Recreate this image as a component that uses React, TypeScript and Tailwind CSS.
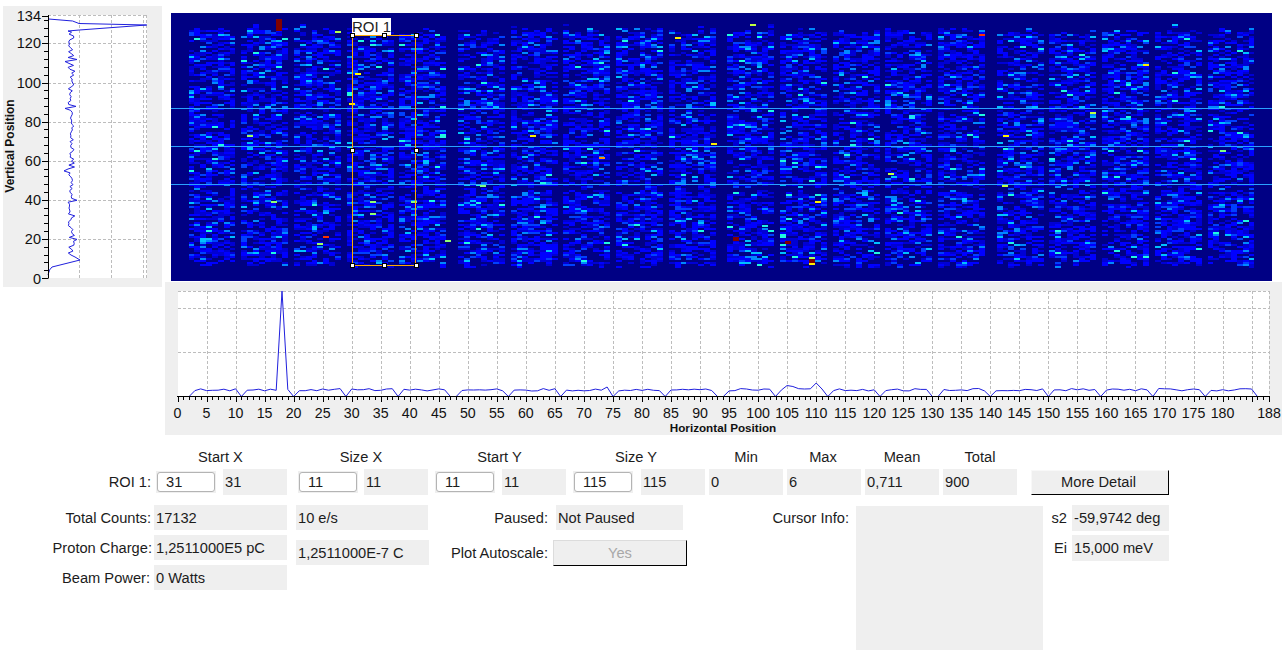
import React from "react";

function rng(seed: number) {
  return () => {
    seed |= 0;
    seed = (seed + 0x6d2b79f5) | 0;
    let t = Math.imul(seed ^ (seed >>> 15), 1 | seed);
    t = (t + Math.imul(t ^ (t >>> 7), 61 | t)) ^ t;
    return ((t ^ (t >>> 14)) >>> 0) / 4294967296;
  };
}

/* ---------- heat map data ---------- */
const BANKS = [3, 12, 21, 30, 39, 49, 58, 67, 76, 85, 95, 104, 113, 122, 131, 141, 150, 159, 168, 177];
const LEVELS = ["#0000d4", "#0000ff", "#0040ff", "#0088ff", "#00c0ff", "#20f8e0"];
const CW = 1101 / 188;

function buildHeat() {
  const r = rng(20240611);
  const paths: string[] = LEVELS.map(() => "");
  for (const b of BANKS) {
    for (let i = 0; i < 8; i++) {
      const c = b + i;
      const x0 = Math.round(171 + c * CW);
      const x1 = Math.round(171 + (c + 1) * CW);
      const top = 28 + Math.floor(r() * 4) * 2 + (r() < 0.2 ? -4 : 0);
      const bottom = 262 + Math.floor(r() * 4) * 2;
      for (let y = top; y < bottom; y += 2) {
        let d = 0.6;
        if (y >= 185 && y <= 190) d = 0.32;
        if (y >= 110 && y <= 113) d = 0.42;
        if (r() > d) continue;
        const p = r();
        const l = p < 0.34 ? 0 : p < 0.8 ? 1 : p < 0.89 ? 2 : p < 0.955 ? 3 : p < 0.988 ? 4 : 5;
        paths[l] += `M${x0} ${y}H${x1}V${y + 2}H${x0}Z`;
      }
    }
  }
  return paths;
}
const HEAT = buildHeat();

const HOT: [number, number, string, number?][] = [
  [276, 19, "#800000", 12],
  [979, 34, "#ff3000"],
  [355, 73, "#ffff00"],
  [349, 103, "#ffee00"],
  [323, 236, "#ff3000"],
  [317, 243, "#a0ff60"],
  [247, 135, "#a0ff60"],
  [370, 201, "#90ff70"],
  [370, 213, "#90ff70"],
  [271, 201, "#90ff70"],
  [411, 201, "#80ff80"],
  [335, 31, "#b0ff50"],
  [733, 237, "#800000", 4],
  [785, 241, "#800000", 3],
  [809, 257, "#a0ff60"],
  [809, 259, "#800000", 4],
  [809, 263, "#ffee00"],
  [750, 24, "#c0ff40"],
  [599, 157, "#ff9000"],
  [909, 115, "#20e0f0", 4],
  [1143, 64, "#ffee00"],
  [815, 201, "#ffee00"],
  [530, 135, "#ffee00"],
  [675, 37, "#ffee00"],
  [711, 143, "#ffee00"],
  [1003, 135, "#ffee00"],
  [1002, 185, "#c0ff40"],
  [762, 225, "#20f0e0"],
  [480, 185, "#80ff80"],
  [888, 173, "#c0ff40"],
  [1220, 150, "#80ff80"],
  [1090, 112, "#c0ff40"],
  [445, 240, "#90ff70"],
];

/* ---------- left profile ---------- */
function buildLeft() {
  const r = rng(77);
  const pts: string[] = ["48,275", "49.5,270", "52,267", "60,265", "68,263", "80,260", "75,257"];
  const special: Record<number, number> = { 239: 77, 201: 77, 171: 64, 108: 65, 107: 76, 61: 65, 60: 77 };
  for (let y = 255; y > 31; y -= 1.955) {
    let x = 71.5 + (r() - 0.5) * 7;
    for (const k of Object.keys(special)) {
      if (Math.abs(Number(k) - y) < 1) x = special[Number(k)];
    }
    pts.push(`${x.toFixed(1)},${y.toFixed(1)}`);
  }
  pts.push("68,31", "79.3,30", "146.7,25", "79,23.5", "72.6,21", "48.7,19");
  return pts.join(" ");
}

/* ---------- bottom profile ---------- */
const ZEROS = new Set([2, 11, 20, 29, 38, 47, 48, 57, 66, 75, 84, 93, 94, 103, 112, 121, 130, 131, 140, 150, 159, 168, 177, 186]);
const bx = (c: number) => 177.5 + c * 5.806;
function buildBottom() {
  const r = rng(9);
  const pts: string[] = [];
  for (let c = 2; c <= 186; c++) {
    let y = 388.5 + r() * 2.5;
    if (ZEROS.has(c)) y = 396.5;
    if (c === 18) y = 291;
    if (c === 110) y = 383;
    if (c === 105) y = 385.5;
    if (c === 106) y = 386.5;
    if (c === 74) y = 387;
    pts.push(`${bx(c).toFixed(1)},${y.toFixed(1)}`);
  }
  return pts.join(" ");
}

const GRID = "#bdbdbd";
const TXT = { fontFamily: "'Liberation Sans', Arial, sans-serif" };

function LeftPlot() {
  const ly = (v: number) => 278 - v * 1.955;
  const majors = [20, 40, 60, 80, 100, 120];
  const labels = [0, 20, 40, 60, 80, 100, 120];
  const minors: number[] = [];
  for (let v = 0; v <= 134; v += 4) if (v % 20 !== 0) minors.push(v);
  return (
    <svg viewBox="3 6 159 281" width={159} height={281} className="block">
      <rect x={48} y={15} width={99} height={263} fill="#fff" />
      {[79.5, 111.5, 143.5, 146.5].map((x) => (
        <line key={x} x1={x} x2={x} y1={15} y2={278} stroke={GRID} strokeDasharray="3 2" />
      ))}
      <line x1={48} x2={147} y1={15.5} y2={15.5} stroke={GRID} strokeDasharray="3 2" />
      {majors.map((v) => (
        <line key={v} x1={48} x2={147} y1={Math.round(ly(v)) + 0.5} y2={Math.round(ly(v)) + 0.5} stroke={GRID} strokeDasharray="3 2" />
      ))}
      <polyline points={buildLeft()} fill="none" stroke="#2020dd" strokeWidth={1} />
      <line x1={48.5} x2={48.5} y1={15} y2={278.5} stroke="#000" />
      {minors.map((v) => (
        <line key={v} x1={44} x2={48} y1={Math.round(ly(v)) + 0.5} y2={Math.round(ly(v)) + 0.5} stroke="#000" />
      ))}
      {[...labels, 134].map((v) => (
        <line key={v} x1={42} x2={48} y1={Math.round(ly(v)) + 0.5} y2={Math.round(ly(v)) + 0.5} stroke="#000" />
      ))}
      {labels.map((v) => (
        <text key={v} x={41} y={v === 0 ? 284 : ly(v) + 5} textAnchor="end" fontSize={14.5} fill="#111" style={TXT}>
          {v}
        </text>
      ))}
      <text x={41} y={21} textAnchor="end" fontSize={14.5} fill="#111" style={TXT}>
        134
      </text>
      <text transform="translate(14 146) rotate(-90)" textAnchor="middle" fontSize={12} fontWeight="bold" fill="#111" style={TXT}>
        Vertical Position
      </text>
    </svg>
  );
}

function HeatMap() {
  const handles: [number, number][] = [
    [352, 35], [384, 35], [416, 35],
    [352, 150], [416, 150],
    [352, 265], [384, 265], [416, 265],
  ];
  return (
    <svg viewBox="171 13 1101 268" width={1101} height={268} className="block" shapeRendering="crispEdges">
      <rect x={171} y={13} width={1101} height={268} fill="#000084" />
      {HEAT.map((d, i) => (
        <path key={i} d={d} fill={LEVELS[i]} />
      ))}
      {HOT.map(([x, y, c, h], i) => (
        <rect key={i} x={x} y={y} width={6} height={h ?? 2} fill={c} />
      ))}
      {[108, 146, 184].map((y) => (
        <rect key={y} x={171} y={y} width={1101} height={1} fill="#2aa0ff" />
      ))}
      <rect x={352.5} y={35.5} width={63} height={229.5} fill="none" stroke="#ffaa00" />
      <rect x={352} y={18} width={39} height={17} fill="#fff" />
      <text x={352} y={32} fontSize={15} fill="#222" style={TXT} shapeRendering="auto">
        ROI 1
      </text>
      {handles.map(([x, y]) => (
        <g key={`${x}-${y}`}>
          <rect x={x - 2} y={y - 2} width={5} height={5} fill="#000" />
          <rect x={x - 1} y={y - 1} width={3} height={3} fill="#fff" />
        </g>
      ))}
    </svg>
  );
}

function BottomPlot() {
  const ticks: number[] = [];
  for (let c = 0; c <= 188; c++) ticks.push(c);
  const labels: number[] = [];
  for (let c = 0; c <= 180; c += 5) labels.push(c);
  labels.push(188);
  const grid: number[] = [];
  for (let c = 5; c <= 185; c += 5) grid.push(c);
  return (
    <svg viewBox="165 282 1117 153" width={1117} height={153} className="block">
      <rect x={178} y={291} width={1091} height={106} fill="#fff" />
      {grid.map((c) => (
        <line key={c} x1={Math.round(bx(c)) + 0.5} x2={Math.round(bx(c)) + 0.5} y1={291} y2={397} stroke={GRID} strokeDasharray="3 2" />
      ))}
      <line x1={1269.5} x2={1269.5} y1={291} y2={397} stroke={GRID} strokeDasharray="3 2" />
      {[291.5, 308.5, 352.5].map((y) => (
        <line key={y} x1={178} x2={1269} y1={y} y2={y} stroke={GRID} strokeDasharray="3 2" />
      ))}
      <polyline points={buildBottom()} fill="none" stroke="#2020dd" strokeWidth={1} />
      <line x1={177} x2={1270} y1={396.5} y2={396.5} stroke="#000" />
      {ticks.map((c) => {
        const x = Math.round(bx(c)) + 0.5;
        const major = c % 5 === 0 || c === 188;
        return <line key={c} x1={x} x2={x} y1={397} y2={major ? 402 : 400} stroke="#000" />;
      })}
      {labels.map((c) => (
        <text key={c} x={bx(c)} y={418} textAnchor="middle" fontSize={14.2} fill="#111" style={TXT}>
          {c}
        </text>
      ))}
      <text x={723} y={432} textAnchor="middle" fontSize={11.7} fontWeight="bold" fill="#111" style={TXT}>
        Horizontal Position
      </text>
    </svg>
  );
}

function Field({ className, children }: { className: string; children?: React.ReactNode }) {
  return <div className={`bg-[#efefef] pl-[2px] flex items-center whitespace-nowrap ${className}`}>{children}</div>;
}

function Input({ className, value }: { className: string; value: string }) {
  return (
    <div className={`w-[60px] h-[22px] bg-[#efefef] flex items-center justify-center ${className}`}>
      <div className="w-[58px] h-[20px] bg-white border border-[#b4b4b4] rounded-[3px] pl-[8px] flex items-center">{value}</div>
    </div>
  );
}

function Label({ className, children }: { className: string; children: React.ReactNode }) {
  return <div className={`text-right whitespace-nowrap flex items-center justify-end ${className}`}>{children}</div>;
}

function Head({ className, children }: { className: string; children: React.ReactNode }) {
  return <div className={`text-center ${className}`}>{children}</div>;
}

export default function App() {
  return (
    <div className="w-[1285px] h-[662px] overflow-hidden bg-white text-[14.67px] leading-[16px] text-[#1c1c1c] font-['Liberation_Sans',Arial,sans-serif]">
      <div className="flex items-start pl-[3px]">
        <div className="mt-[6px] w-[159px] h-[281px] bg-[#efefef]">
          <LeftPlot />
        </div>
        <div className="ml-[3px] w-[1117px]">
          <div className="ml-[6px] mt-[13px] w-[1101px] h-[268px]">
            <HeatMap />
          </div>
          <div className="mt-[1px] h-[153px] bg-[#efefef]">
            <BottomPlot />
          </div>
        </div>
      </div>

      <div className="mt-[14px] h-[16px] flex pl-[155px]">
        <Head className="w-[131px]">Start X</Head>
        <Head className="ml-[9px] w-[132px]">Size X</Head>
        <Head className="ml-[7px] w-[131px]">Start Y</Head>
        <Head className="ml-[7px] w-[128px]">Size Y</Head>
        <Head className="ml-[9px] w-[74px]">Min</Head>
        <Head className="ml-[3px] w-[74px]">Max</Head>
        <Head className="ml-[5px] w-[74px]">Mean</Head>
        <Head className="ml-[4px] w-[74px]">Total</Head>
      </div>

      <div className="mt-[4px] h-[26px] flex items-center">
        <Label className="w-[151px]">ROI 1:</Label>
        <Input className="ml-[5px]" value="31" />
        <Field className="ml-[7px] w-[64px] h-[26px]">31</Field>
        <Input className="ml-[11px]" value="11" />
        <Field className="ml-[6px] w-[64px] h-[26px]">11</Field>
        <Input className="ml-[7px]" value="11" />
        <Field className="ml-[7px] w-[64px] h-[26px]">11</Field>
        <Input className="ml-[7px]" value="115" />
        <Field className="ml-[8px] w-[64px] h-[26px]">115</Field>
        <Field className="ml-[4px] w-[74px] h-[26px]">0</Field>
        <Field className="ml-[4px] w-[74px] h-[26px]">6</Field>
        <Field className="ml-[4px] w-[74px] h-[26px]">0,711</Field>
        <Field className="ml-[4px] w-[74px] h-[26px]">900</Field>
        <button className="ml-[14px] w-[138px] h-[25px] bg-[#efefef] pr-[3px] border-t border-l border-t-[#f8f8f8] border-l-[#f8f8f8] border-r border-b border-r-black border-b-black">
          More Detail
        </button>
      </div>

      <div className="mt-[10px] flex items-start">
        <div className="flex flex-col gap-[5px]">
          <div className="flex">
            <Label className="w-[151px] h-[25px]">Total Counts:</Label>
            <Field className="ml-[3px] w-[133px] h-[25px]">17132</Field>
          </div>
          <div className="flex">
            <Label className="w-[152px] h-[25px]">Proton Charge:</Label>
            <Field className="ml-[2px] w-[133px] h-[25px]">1,2511000E5 pC</Field>
          </div>
          <div className="flex">
            <Label className="w-[150px] h-[25px]">Beam Power:</Label>
            <Field className="ml-[4px] w-[133px] h-[25px]">0 Watts</Field>
          </div>
        </div>

        <div className="ml-[9px] flex flex-col gap-[10px]">
          <Field className="w-[132px] h-[25px]">10 e/s</Field>
          <Field className="w-[133px] h-[25px]">1,2511000E-7 C</Field>
        </div>

        <div className="flex flex-col gap-[10px]">
          <div className="flex">
            <Label className="w-[119px] h-[25px]">Paused:</Label>
            <Field className="ml-[8px] w-[127px] h-[25px]">Not Paused</Field>
          </div>
          <div className="flex">
            <Label className="w-[119px] h-[25px]">Plot Autoscale:</Label>
            <button
              disabled
              className="ml-[5px] w-[134px] h-[26px] bg-[#efefef] text-[#a8a8a8] border-t border-l border-t-[#dcdcdc] border-l-[#dcdcdc] border-r border-b border-r-black border-b-black"
            >
              Yes
            </button>
          </div>
        </div>

        <Label className="w-[162px] h-[25px]">Cursor Info:</Label>
        <div className="ml-[7px] mt-[1px] w-[187px] h-[144px] bg-[#efefef]" />

        <div className="flex flex-col gap-[4px]">
          <div className="flex">
            <Label className="w-[24px] h-[26px]">s2</Label>
            <Field className="ml-[5px] w-[97px] h-[26px]">-59,9742 deg</Field>
          </div>
          <div className="flex">
            <Label className="w-[24px] h-[26px]">Ei</Label>
            <Field className="ml-[5px] w-[97px] h-[26px]">15,000 meV</Field>
          </div>
        </div>
      </div>
    </div>
  );
}
